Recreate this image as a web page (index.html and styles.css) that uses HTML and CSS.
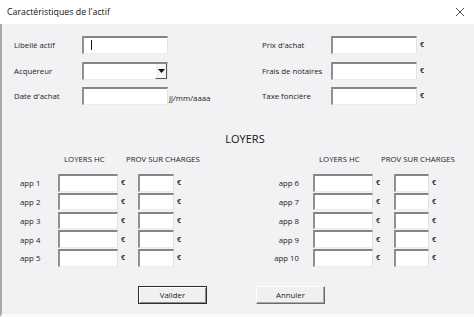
FILE: index.html
```html
<!DOCTYPE html>
<html lang="fr">
<head>
<meta charset="utf-8">
<title>Caractéristiques de l'actif</title>
<link rel="stylesheet" href="styles.css">
</head>
<body>
<div class="window">
  <div class="titlebar">
    <span class="title">Caractéristiques de l'actif</span>
    <svg class="close" width="10" height="10" viewBox="0 0 10 10"><path d="M1 1L9 9M9 1L1 9" stroke="#333" stroke-width="0.9" fill="none"/></svg>
  </div>
  <div class="body">
    <div class="top">
      <span class="lbl">Libellé actif</span>
      <span class="box"><span class="caret"></span></span>
      <span></span>
      <span class="lbl">Prix d'achat</span>
      <span class="box"></span>
      <span class="eur">€</span>

      <span class="lbl">Acquéreur</span>
      <span class="box combo"><span class="drop"><svg width="7" height="4" viewBox="0 0 7 4"><path d="M0 0H7L3.5 4Z" fill="#111"/></svg></span></span>
      <span></span>
      <span class="lbl">Frais de notaires</span>
      <span class="box"></span>
      <span class="eur">€</span>

      <span class="lbl">Date d'achat</span>
      <span class="box"></span>
      <span class="hint">jj/mm/aaaa</span>
      <span class="lbl">Taxe foncière</span>
      <span class="box"></span>
      <span class="eur">€</span>
    </div>

    <div class="heading">LOYERS</div>

    <div class="rows">
      <div class="grp grp-left">
        <span></span>
        <span class="hdr hc">LOYERS HC</span>
        <span class="hdr prov">PROV SUR CHARGES</span>
        <span class="lbl">app 1</span><span class="box"></span><span class="eur">€</span><span class="box"></span><span class="eur">€</span>
        <span class="lbl">app 2</span><span class="box"></span><span class="eur">€</span><span class="box"></span><span class="eur">€</span>
        <span class="lbl">app 3</span><span class="box"></span><span class="eur">€</span><span class="box"></span><span class="eur">€</span>
        <span class="lbl">app 4</span><span class="box"></span><span class="eur">€</span><span class="box"></span><span class="eur">€</span>
        <span class="lbl">app 5</span><span class="box"></span><span class="eur">€</span><span class="box"></span><span class="eur">€</span>
      </div>
      <div class="grp grp-right">
        <span></span>
        <span class="hdr hc">LOYERS HC</span>
        <span class="hdr prov">PROV SUR CHARGES</span>
        <span class="lbl">app 6</span><span class="box"></span><span class="eur">€</span><span class="box"></span><span class="eur">€</span>
        <span class="lbl">app 7</span><span class="box"></span><span class="eur">€</span><span class="box"></span><span class="eur">€</span>
        <span class="lbl">app 8</span><span class="box"></span><span class="eur">€</span><span class="box"></span><span class="eur">€</span>
        <span class="lbl">app 9</span><span class="box"></span><span class="eur">€</span><span class="box"></span><span class="eur">€</span>
        <span class="lbl">app 10</span><span class="box"></span><span class="eur">€</span><span class="box"></span><span class="eur">€</span>
      </div>
    </div>

    <div class="buttons">
      <button class="btn btn-default">Valider</button>
      <button class="btn">Annuler</button>
    </div>
  </div>
</div>
</body>
</html>
```

FILE: styles.css
```css
* { box-sizing: border-box; }
html, body { margin: 0; padding: 0; }
body {
  width: 474px;
  height: 317px;
  overflow: hidden;
  font-family: "Open Sans", "DejaVu Sans", sans-serif;
  color: #222;
  background: #f2f1f4;
}
.window {
  width: 474px;
  height: 317px;
  display: flex;
  flex-direction: column;
}
.titlebar {
  height: 24px;
  flex: none;
  background: #fff;
  display: flex;
  align-items: center;
  justify-content: space-between;
  padding: 0 9px 0 7px;
}
.title {
  font-size: 8.8px;
  color: #111;
  line-height: 12px;
}
.close { display: block; }
.body {
  flex: 1;
  background: #f2f1f4;
  border-left: 2px solid #a9a9ab;
  border-bottom: 3px solid #fbfbfc;
  display: flex;
  flex-direction: column;
}
.lbl {
  font-size: 7.8px;
  line-height: 10px;
  align-self: center;
  white-space: nowrap;
}
.box {
  display: block;
  height: 18px;
  background: #fff;
  border-style: solid;
  border-width: 2px 1px 1px 2px;
  border-color: #858587 #e2e2e4 #ececee #909092;
  position: relative;
}
.caret {
  position: absolute;
  left: 7px;
  top: 2px;
  width: 1px;
  height: 10px;
  background: #111;
}
.combo .drop {
  position: absolute;
  right: 0;
  top: 0;
  bottom: 0;
  width: 12px;
  background: #f4f4f4;
  border-right: 1px solid #555;
  border-bottom: 1px solid #555;
  border-left: 1px solid #fff;
  display: flex;
  align-items: center;
  justify-content: center;
}
.combo .drop svg { display: block; }
.eur {
  font-size: 7px;
  font-weight: 700;
  color: #333;
  align-self: center;
  padding-left: 3px;
  line-height: 10px;
}
.hint {
  font-size: 7.8px;
  line-height: 10px;
  align-self: end;
  padding-left: 1px;
  padding-bottom: 2px;
}
.top {
  display: grid;
  grid-template-columns: 68px 86px 94px 69px 86px auto;
  grid-auto-rows: 18px;
  row-gap: 7.5px;
  padding: 12px 0 0 12px;
}
.heading {
  margin-top: 27px;
  height: 14px;
  line-height: 14px;
  font-size: 11px;
  text-align: center;
  padding-left: 14px;
  color: #111;
}
.rows {
  margin-top: 7px;
  display: flex;
  padding-left: 18px;
  gap: 68px;
}
.grp {
  display: grid;
  grid-template-rows: 21px repeat(5, 18.75px);
  align-items: start;
}
.grp .box { height: 17.5px; }
.grp .lbl { align-self: center; }
.grp-left { grid-template-columns: 38px 60px 20px 36px 20px; }
.grp-right { grid-template-columns: 51px 60px 21px 35px 20px; }
.grp-right .lbl { text-align: right; padding-right: 14px; }
.hdr {
  font-size: 7.8px;
  line-height: 12px;
  white-space: nowrap;
}
.hc { grid-column: 2; padding-left: 6px; }
.prov { grid-column: 3 / span 3; padding-left: 8px; }
.buttons {
  margin-top: 18px;
  display: flex;
  gap: 49px;
  padding-left: 136px;
}
.btn {
  width: 69px;
  height: 18px;
  padding: 0;
  font-family: "Open Sans", "DejaVu Sans", sans-serif;
  font-size: 7.8px;
  color: #222;
  background: #f0f0f0;
  border: 1px solid;
  border-color: #fff #6c6c6c #6c6c6c #fff;
  box-shadow: inset -1px -1px 0 #a8a8a8;
}
.btn-default {
  border: 1px solid #2e2e2e;
  box-shadow: inset 1px 1px 0 #fff, inset -1px -1px 0 #8a8a8a;
}
```
